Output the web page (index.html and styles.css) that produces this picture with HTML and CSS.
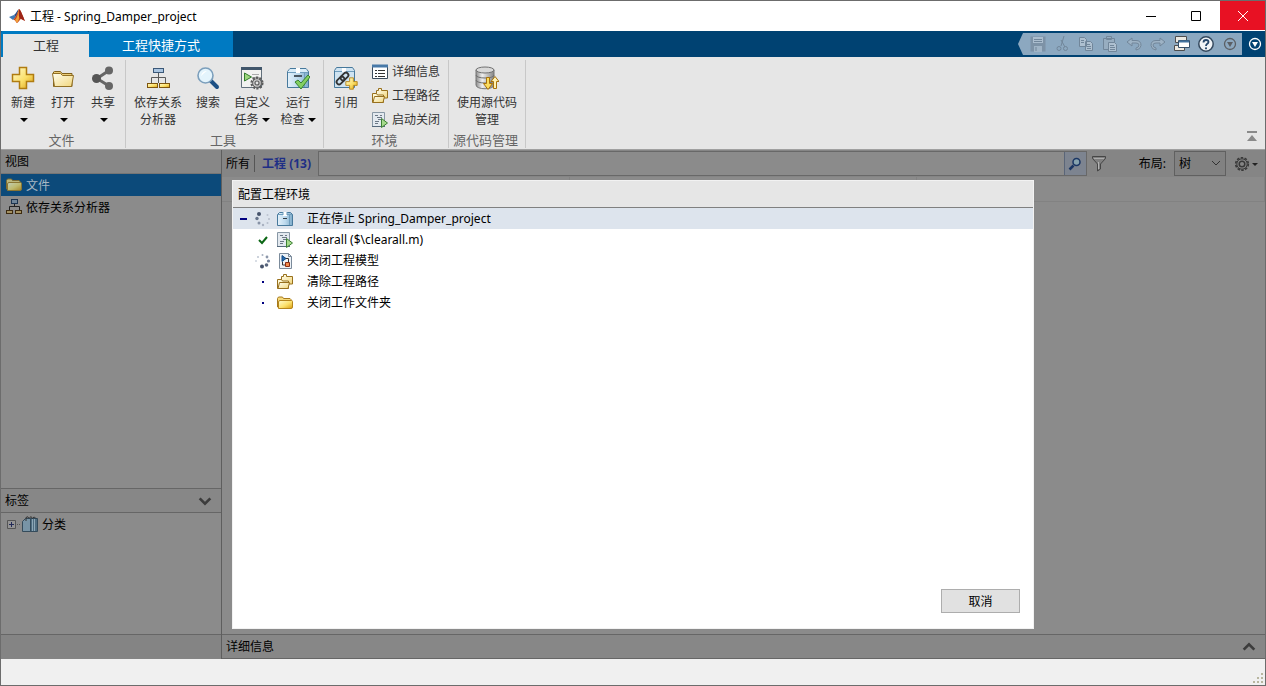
FILE: index.html
```
<!DOCTYPE html>
<html lang="zh-CN">

<head>
  <meta charset="utf-8">
  <title>工程 - Spring_Damper_project</title>
  <link rel="stylesheet" href="styles.css">
</head>

<body>
  <!-- icons used more than once -->
  <svg class="defs" width="0" height="0" aria-hidden="true">
    <defs>
      <linearGradient id="gold" x1="0" y1="0" x2="1" y2="1">
        <stop offset="0" stop-color="#fffbd0" />
        <stop offset=".55" stop-color="#fbe06a" />
        <stop offset="1" stop-color="#d99c10" />
      </linearGradient>
      <linearGradient id="cream" x1="0" y1="0" x2="1" y2="1">
        <stop offset="0" stop-color="#fffef0" />
        <stop offset="1" stop-color="#f1d67c" />
      </linearGradient>
      <linearGradient id="blue" x1="0" y1="0" x2="1" y2="0">
        <stop offset="0" stop-color="#e4f1fa" />
        <stop offset=".5" stop-color="#bddaee" />
        <stop offset="1" stop-color="#7eabc9" />
      </linearGradient>
      <linearGradient id="steel" x1="0" y1="0" x2="1" y2="0">
        <stop offset="0" stop-color="#8c8c8c" />
        <stop offset=".35" stop-color="#eeeeee" />
        <stop offset="1" stop-color="#858585" />
      </linearGradient>
    </defs>
    <symbol id="tree" viewBox="0 0 24 24">
      <path d="M12.500 7v10M5.500 17v-5.500h14V17" fill="none" stroke="#5a5a5a" />
      <rect x="7.500" y="2.500" width="10" height="4" fill="#a9c4e0" stroke="#3b5878" />
      <rect x="1.500" y="17.500" width="10" height="4" fill="url(#gold)" stroke="#7d5510" />
      <rect x="13.500" y="17.500" width="10" height="4" fill="url(#gold)" stroke="#7d5510" />
    </symbol>
    <symbol id="tree-small" viewBox="0 0 16 16">
      <path d="M8.500 4v4M3.500 11V7.500h10V11" fill="none" stroke="#222" />
      <rect x="5.500" y=".5" width="6" height="4" fill="#6f8599" stroke="#1c3450" />
      <rect x=".5" y="11.500" width="6" height="3" fill="#a39162" stroke="#3d2b10" />
      <rect x="9.500" y="11.500" width="6" height="3" fill="#a39162" stroke="#3d2b10" />
    </symbol>
    <symbol id="box" viewBox="0 0 24 24">
      <path d="M1.500 5.500 4 2.500h16l2.500 3v16h-21z" fill="url(#blue)" stroke="#47799c" />
      <path d="M2 6h20l-2-3H4z" fill="#d9ecf8" />
      <path d="M2 6.500h8M14 6.500h8M18.500 6.500V21" fill="none" stroke="#6f9dbd" />
      <path d="M10 2h4v5h-4z" fill="#fff" />
      <path d="M8 10h8" stroke="#4a5660" stroke-width="2" />
    </symbol>
    <symbol id="box-small" viewBox="0 0 16 16">
      <path d="M.5 3.500l2-2h11l2 2v11H.5z" fill="url(#blue)" stroke="#47799c" />
      <path d="M1 3.500h14M12.500 4v10" fill="none" stroke="#6f9dbd" />
      <path d="M6 1h4v4H6z" fill="#fff" />
      <path d="M6 1v3M10 1v3" stroke="#6f9dbd" />
      <path d="M6 7.500h4" stroke="#333c44" />
    </symbol>
    <symbol id="folder" viewBox="0 0 16 16">
      <path d="M.5 12V3.500l1-1.500h4l1 1.500h6.500l1 1V12z" fill="#f6da7c" stroke="#a77a1c" />
      <path d="M1.500 13.500V7q0-1.500 1.500-1.500h11.500q1 0 1 1v5.500q0 1.500-1.500 1.500z" fill="url(#gold)" stroke="#b5851c" />
    </symbol>
    <symbol id="folders" viewBox="0 0 16 16">
      <path d="M4.500 10V2.500h2V.5h3v2h6V10z" fill="url(#cream)" stroke="#98701d" />
      <path d="M.5 14.500v-9h4l1 1.500h6v7.500z" fill="#fff8d2" stroke="#98701d" />
      <path d="M1 14.500 2.500 8.500h10l-1.500 6z" fill="url(#cream)" stroke="#98701d" />
    </symbol>
    <symbol id="script" viewBox="0 0 16 16">
      <path d="M.5.500h12v14H.5z" fill="#e3e9ef" stroke="#8797a5" />
      <path d="M0 14.500h13" stroke="#56697c" />
      <path d="M3 3.500h3M5 5.500h5M6 7.500h3M3 9.500h4M3 11.500h3M8 3.500h2" stroke="#6b7785" />
      <path d="M9.500 6.500v9l6-4.500z" fill="#a6da8c" stroke="#3c8034" />
    </symbol>
    <symbol id="gear" viewBox="0 0 16 16">
      <circle cx="8" cy="8" r="6" fill="none" stroke="#5c5c5c" stroke-width="3" stroke-dasharray="2.400 1.370" />
      <circle cx="8" cy="8" r="5" fill="#c6c6c6" stroke="#5c5c5c" />
      <circle cx="8" cy="8" r="2.300" fill="#e5e5e5" stroke="#5c5c5c" stroke-width="1.300" />
    </symbol>
    <symbol id="plus" viewBox="0 0 24 24">
      <path d="M8.500 1.500h7v7h7v7h-7v7h-7v-7h-7v-7h7z" fill="url(#gold)" stroke="#b07c10" stroke-width="1.500" />
    </symbol>
  </svg>

  <div class="window">
    <header class="titlebar">
      <svg class="logo" viewBox="0 0 16 16">
        <path d="M0 9l5-2 2 2-3 3z" fill="#3e79b5" />
        <path d="M5 7c2-1 3-5 5-6L7 9z" fill="#2a4d84" />
        <path d="M10 1C8 5 8 8 4 12c2-1 3 3 4 3 2-1 3-4 4-4s2 1 4 2C14 9 12 2 10 1z" fill="#c8441c" />
        <path d="M10 1C9 6 8 10 6 12l2 3c2-2 3-7 2-14z" fill="#f0a23c" />
        <path d="M10 1c0 5-1 8 2 10 1 0 2 1 4 2C14 9 12 2 10 1z" fill="#9c2418" />
      </svg>
      <h1>工程 - Spring_Damper_project</h1>
      <div class="window-buttons">
        <button type="button" aria-label="最小化"><svg viewBox="0 0 12 12"><path d="M1 6.500h10" /></svg></button>
        <button type="button" aria-label="最大化"><svg viewBox="0 0 12 12"><path d="M1.500 1.500h9v9h-9z" /></svg></button>
        <button type="button" class="close" aria-label="关闭"><svg viewBox="0 0 12 12"><path d="M1 1l10 10M11 1 1 11" /></svg></button>
      </div>
    </header>

    <nav class="tabs">
      <button type="button" class="tab active">工程</button>
      <button type="button" class="tab">工程快捷方式</button>
      <div class="quick">
        <button type="button" aria-label="保存"><svg viewBox="0 0 16 16"><g class="faded"><path d="M.5.500h15v15h-15z" fill="#77899c" /><path d="M3 1h10v6H3z" fill="#b8c7d4" /><path d="M4 10h8v6H4z" fill="#a8bac9" /><path d="M4 3.500h8M4 5.500h8M6 11v4" stroke="#66788a" /></g></svg></button>
        <button type="button" aria-label="剪切"><svg viewBox="0 0 16 16"><g class="faded" fill="none" stroke="#66788a"><path d="M10 0 7 10M7 4l4 7" /><circle cx="5" cy="12.500" r="2" /><circle cx="11.500" cy="12.500" r="2" /></g></svg></button>
        <button type="button" aria-label="复制"><svg viewBox="0 0 16 16"><g class="faded" fill="#bccbd8" stroke="#66788a"><path d="M1.500 1.500h5l2 2v7h-7zM7.500 5.500h5l2 2v7h-7z" /><path d="M3 4.500h3M3 6.500h3M9 8.500h3M9 10.500h4M9 12.500h4" /></g></svg></button>
        <button type="button" aria-label="粘贴"><svg viewBox="0 0 16 16"><g class="faded" fill="#9cb0c1" stroke="#66788a"><path d="M1.500 2.500h11v11h-11zM4.500.500h5v3h-5z" /><path d="M6.500 6.500h6l2 2v7h-8z" fill="#bccbd8" /><path d="M8 9.500h4M8 11.500h5M8 13.500h5" /></g></svg></button>
        <button type="button" aria-label="撤销"><svg viewBox="0 0 16 16"><path class="faded" d="M1 6l5-4v2.500h4q5 0 5 5-.5 4-5 4.500v-2q3-.5 3-3 0-2-3-2H6V10z" fill="#a5b8c8" stroke="#66788a" /></svg></button>
        <button type="button" aria-label="重做"><svg viewBox="0 0 16 16"><path class="faded" d="M15 6l-5-4v2.500H6q-5 0-5 5 .5 4 5 4.500v-2q-3-.5-3-3 0-2 3-2h4V10z" fill="#a5b8c8" stroke="#66788a" /></svg></button>
        <button type="button" aria-label="切换窗口"><svg viewBox="0 0 16 16"><path d="M1.500.500h11v6h-11zM.5 9.500h10v5H.5z" fill="#ece9e2" stroke="#4e4e4e" /><path d="M4.500 4.500h11v7h-11z" fill="#fff" stroke="#35506b" /><path d="M5 5.500h10" stroke="#4273a0" stroke-width="2" /></svg></button>
        <button type="button" aria-label="帮助"><svg viewBox="0 0 16 16"><circle cx="8" cy="8" r="7.200" fill="#f0f3f6" stroke="#34495e" stroke-width="1.500" /><path d="M5.500 6.500q0-2.500 2.500-2.500t2.500 2q0 1-1.500 2-1 .7-1 2" fill="none" stroke="#25466a" stroke-width="1.800" /><circle cx="8" cy="12.300" r="1.100" fill="#25466a" /></svg></button>
        <button type="button" aria-label="更多"><svg viewBox="0 0 16 16"><circle cx="8" cy="8" r="5.500" fill="none" stroke="#5b5f64" stroke-width="1.300" /><path d="M5 6h6l-3 5z" fill="#5b5f64" /></svg></button>
      </div>
      <button type="button" class="quick-menu" aria-label="自定义工具栏"><svg viewBox="0 0 16 16"><circle cx="8" cy="8" r="5.500" fill="none" stroke="#fff" stroke-width="1.300" /><path d="M5 6h6l-3 5z" fill="#fff" /></svg></button>
    </nav>

    <section class="ribbon">
      <div class="group file">
        <div class="tools">
          <button type="button" class="tool"><svg viewBox="0 0 24 24"><use href="#plus" /></svg>新建<i class="caret"></i></button>
          <button type="button" class="tool"><svg viewBox="0 0 24 24"><path d="M2.500 20.500V6l1-.5h6l1.500 2h10v13z" fill="#eccd78" stroke="#80601c" /><path d="M3.500 20.500 1.500 7.500h8l2 2h11l-2 11z" fill="url(#cream)" stroke="#927024" /></svg>打开<i class="caret"></i></button>
          <button type="button" class="tool"><svg viewBox="0 0 24 24"><path d="M18 4.500 6 12.500 18 20" fill="none" stroke="#666" stroke-width="3" /><circle cx="18" cy="4.500" r="4" fill="#666" /><circle cx="5.500" cy="12.500" r="4.500" fill="#555" /><circle cx="18" cy="20" r="4" fill="#666" /></svg>共享<i class="caret"></i></button>
        </div>
        <h2>文件</h2>
      </div>
      <div class="group utils">
        <div class="tools">
          <button type="button" class="tool wide"><svg viewBox="0 0 24 24"><use href="#tree" /></svg>依存关系<br>分析器</button>
          <button type="button" class="tool"><svg viewBox="0 0 24 24"><path d="m15 15 6 6" stroke="#1c4f84" stroke-width="4" stroke-linecap="round" /><circle cx="9.500" cy="9.500" r="7.500" fill="#e4f4fc" stroke="#7c9fbc" stroke-width="1.600" /><path d="M5 10q1-5 6-5-2 1-6 5z" fill="#fff" /></svg>搜索</button>
          <button type="button" class="tool custom"><svg viewBox="0 0 24 24"><path d="M1.500 1.500h20v20h-20z" fill="#f2f2f0" stroke="#62707c" /><path d="M1 2.500h21" stroke="#41566b" stroke-width="3" /><path d="M12 8.500h7M12 11.500h7" stroke="#aaa" /><path d="M4.500 7v8l7-4z" fill="#9dd77d" stroke="#347c2d" /><use href="#gear" x="10" y="10" width="14" height="14" /></svg>自定义<span>任务<i class="caret"></i></span></button>
          <button type="button" class="tool check"><svg viewBox="0 0 24 24"><use href="#box" /><path d="m9 16 3-2 3 3 7-8 2 2-9 12z" fill="#83cf62" stroke="#36822f" /></svg>运行<span>检查<i class="caret"></i></span></button>
        </div>
        <h2>工具</h2>
      </div>
      <div class="group env">
        <div class="tools">
          <button type="button" class="tool"><svg viewBox="0 0 24 24"><path d="M.5 4.500l2-3h16l2 3v17H.5z" fill="#cfe3f1" stroke="#47799c" /><path d="M1 5.500h19" stroke="#6f9dbd" /><path d="M8 2h4v4H8z" fill="#fff" /><g fill="none" stroke="#333" stroke-width="1.800"><rect x="2" y="12" width="9" height="5" rx="2.500" transform="rotate(-45 6.500 14.500)" /><rect x="6" y="8" width="9" height="5" rx="2.500" transform="rotate(-45 10.500 10.500)" /></g><use href="#plus" x="11" y="11" width="13" height="13" /></svg>引用</button>
          <div class="tool-list">
            <button type="button"><svg viewBox="0 0 16 16"><path d="M.5 1.500h15v13H.5z" fill="#fff" stroke="#3c4c5c" /><path d="M0 2h16" stroke="#4879a8" stroke-width="3" /><path d="M3 6.500h2M3 9.500h2M3 12.500h2M6 6.500h7M6 9.500h7M6 12.500h7" stroke="#333" /></svg>详细信息</button>
            <button type="button"><svg viewBox="0 0 16 16"><use href="#folders" /></svg>工程路径</button>
            <button type="button"><svg viewBox="0 0 16 16"><use href="#script" /></svg>启动关闭</button>
          </div>
        </div>
        <h2>环境</h2>
      </div>
      <div class="group source">
        <div class="tools">
          <button type="button" class="tool wide"><svg viewBox="0 0 24 24"><path d="M1 4v15c0 5 18 5 18 0V4z" fill="url(#steel)" stroke="#777" /><ellipse cx="10" cy="4" rx="9" ry="3" fill="#d9d9d9" stroke="#707070" /><path d="M1 9c0 4 18 4 18 0M1 14c0 4 18 4 18 0" fill="none" stroke="#707070" /><path d="M11.500 11.500h3v6h3l-4.500 6-4.500-6h3z" fill="#fbdc5e" stroke="#a8720c" /><path d="M18.500 22.500h3v-7h2.500l-4-5-4 5h2.500z" fill="#fff3b4" stroke="#a8720c" /></svg>使用源代码<br>管理</button>
        </div>
        <h2>源代码管理</h2>
      </div>
      <button type="button" class="collapse" aria-label="折叠工具条"><svg viewBox="0 0 12 12"><path d="M1 1h10v2H1zM6 5l5 6H1z" fill="#8a8a8a" /></svg></button>
    </section>

    <div class="workspace">
      <aside class="sidebar">
        <h2 class="panel-title">视图</h2>
        <ul class="views">
          <li class="selected"><svg viewBox="0 0 16 16"><use href="#folder" /></svg>文件</li>
          <li><svg viewBox="0 0 16 16"><use href="#tree-small" /></svg>依存关系分析器</li>
        </ul>
        <h2 class="panel-title labels">标签<svg class="chevron" viewBox="0 0 12 12"><path d="m2 4 4 4 4-4" /></svg></h2>
        <div class="label-tree">
          <svg class="expander" viewBox="0 0 14 10"><path d="M.5.500h8v8h-8z" fill="#949494" stroke="#555" /><path d="M2 4.500h5M4.500 2v5" stroke="#222a58" /><path d="M10 4.500h4" stroke="#555" stroke-dasharray="1 1" /></svg>
          <svg viewBox="0 0 16 16"><path d="M5.500 2.500h10v13h-10z" fill="#4f6c80" stroke="#344b5b" /><path d="M.5 5.500l3-3h5v13h-8z" fill="#7894a6" stroke="#344b5b" /><path d="M10.500 3v12M12.500 3v12" stroke="#8da7b7" /><path d="M4 5V1.500q2-2 3 1M7.500 1.500q2-2 3 1M11 1.500q2-1 3 1" fill="none" stroke="#333" /></svg>
          分类
        </div>
        <div class="sidebar-foot"></div>
      </aside>

      <main class="content">
        <div class="toolbar">
          <a href="#" class="all">所有</a>
          <a href="#" class="crumb">工程 (13)</a>
          <div class="search">
            <input type="text" aria-label="搜索文件">
            <button type="button" aria-label="搜索"><svg viewBox="0 0 14 14"><path d="m1.500 12.500 4-4" stroke="#1b3664" stroke-width="2.500" /><circle cx="8.500" cy="5" r="3.500" fill="#86a2ae" stroke="#1b3664" stroke-width="1.500" /></svg></button>
          </div>
          <button type="button" class="filter" aria-label="筛选"><svg viewBox="0 0 16 16"><path d="M1.500.500h13v2L9.500 8v5l-3 2V8L1.500 2.500z" fill="#7f7f7f" stroke="#454545" /><path d="M3 2.500h10" stroke="#aaa" /><path d="M7.500 6v7" stroke="#b4b4b4" /></svg></button>
          <label for="layout">布局:</label>
          <div class="select">
            <select id="layout">
              <option>树</option>
            </select>
            <svg viewBox="0 0 12 12"><path d="m2 4 4 4 4-4" /></svg>
          </div>
          <button type="button" class="options" aria-label="选项"><svg viewBox="0 0 16 16"><g fill="none" stroke="#383838"><circle cx="8" cy="8" r="6.300" stroke-width="1.600" stroke-dasharray="2.500 1.450" /><circle cx="8" cy="8" r="5.200" /><circle cx="8" cy="8" r="2.800" stroke-width="1.500" /></g></svg><i class="caret"></i></button>
        </div>
        <div class="columns"><span></span><span></span><span></span></div>
        <div class="files"></div>
        <h2 class="details">详细信息<svg class="chevron" viewBox="0 0 12 12"><path d="m2 8 4-4 4 4" /></svg></h2>
      </main>

      <div class="overlay">
        <section class="dialog" role="dialog" aria-labelledby="dialog-title">
          <h2 id="dialog-title">配置工程环境</h2>
          <ul class="steps">
            <li class="current">
              <i class="dash"></i>
              <svg class="state" viewBox="0 0 16 16"><circle cx="4" cy="3" r="2" fill="#46536b" /><circle cx="2" cy="7.500" r="1.700" fill="#66738a" /><circle cx="4" cy="12" r="1.500" fill="#8793a6" /><circle cx="8" cy="14" r="1.200" fill="#a8b1c0" /><circle cx="12.500" cy="12" r="1" fill="#b4bdc9" /><circle cx="14" cy="8" r="1" fill="#b4bdc9" /><circle cx="12.500" cy="4" r="1" fill="#bdc5d0" /></svg>
              <svg class="icon" viewBox="0 0 16 16"><use href="#box-small" /></svg>
              正在停止 Spring_Damper_project
            </li>
            <li>
              <svg class="state" viewBox="0 0 16 16"><path d="m4 8 3 3 5-6" fill="none" stroke="#0b6614" stroke-width="2" /></svg>
              <svg class="icon" viewBox="0 0 16 16"><use href="#script" /></svg>
              clearall ($\clearall.m)
            </li>
            <li>
              <svg class="state" viewBox="0 0 16 16"><circle cx="7" cy="13.500" r="2" fill="#46536b" /><circle cx="11.500" cy="12" r="1.800" fill="#59667e" /><circle cx="13.500" cy="8" r="1.600" fill="#74819a" /><circle cx="12" cy="4" r="1.400" fill="#8c97aa" /><circle cx="7.500" cy="2" r="1" fill="#a8b1c0" /><circle cx="3" cy="4" r="1" fill="#bdc5d0" /><circle cx="1" cy="8" r="1" fill="#cdd3dc" /></svg>
              <svg class="icon" viewBox="0 0 16 16"><path d="M2.500.500h9l3 3v12h-12z" fill="#edf2f7" stroke="#7b8b9b" /><path d="M11.500.500v3h3" fill="none" stroke="#7b8b9b" /><path d="M5 2.500v6l4-3z" fill="#2468ab" stroke="#124a85" /><path d="M9 5.500h2.500V9" fill="none" stroke="#333" /><path d="M8.500 9.500h4v4h-4z" fill="#f28b4c" stroke="#8c2c12" /><path d="M8 12H5.500V9" fill="none" stroke="#333" /></svg>
              关闭工程模型
            </li>
            <li>
              <svg class="state" viewBox="0 0 16 16"><path d="M7 7h2v2H7z" fill="#000080" /></svg>
              <svg class="icon" viewBox="0 0 16 16"><use href="#folders" /></svg>
              清除工程路径
            </li>
            <li>
              <svg class="state" viewBox="0 0 16 16"><path d="M7 7h2v2H7z" fill="#000080" /></svg>
              <svg class="icon" viewBox="0 0 16 16"><use href="#folder" /></svg>
              关闭工作文件夹
            </li>
          </ul>
          <div class="actions"><button type="button">取消</button></div>
        </section>
      </div>
    </div>

    <footer class="statusbar">
      <svg viewBox="0 0 12 12"><path d="M9 1h2v2H9zM5 5h2v2H5zM9 5h2v2H9zM1 9h2v2H1zM5 9h2v2H5zM9 9h2v2H9z" fill="#b8b6a0" /></svg>
    </footer>
  </div>
</body>

</html>
```

FILE: styles.css
```
* {
box-sizing: border-box;
}

body {
margin: 0;
font-family: "Noto Sans", "Noto Sans CJK SC", sans-serif;
font-size: 12px;
line-height: 17px;
color: #000;
}

h1, h2, ul {
margin: 0;
padding: 0;
font-size: 12px;
font-weight: normal;
list-style: none;
}

button {
font: inherit;
color: inherit;
background: none;
border: none;
padding: 0;
}

a {
color: inherit;
text-decoration: none;
}

svg {
display: block;
flex: none;
width: 16px;
height: 16px;
}

.defs {
position: absolute;
width: 0;
height: 0;
}

.window {
display: flex;
flex-direction: column;
height: 100vh;
border: 1px solid #6c6c6c;
}

/* title bar */
.titlebar {
display: flex;
align-items: center;
height: 30px;
padding-left: 8px;
background-color: #fff;
}

.titlebar h1 {
flex: 1;
margin-left: 5px;
}

.window-buttons {
display: flex;
height: 29px;
align-self: flex-start;
}

.window-buttons button {
display: flex;
align-items: center;
justify-content: center;
width: 45px;
}

.window-buttons svg {
width: 12px;
height: 12px;
fill: none;
stroke: #000;
}

.window-buttons .close {
margin-left: 2px;
background-color: #e81123;
}

.window-buttons .close svg {
stroke: #fff;
}

/* tabs */
.tabs {
display: flex;
height: 26px;
background-color: #004272;
}

.tab {
width: 144px;
padding-top: 2px;
font-size: 13px;
color: #fff;
background-color: #007ac2;
}

.tab.active {
width: 88px;
color: #333;
background-color: #e6e6e6;
border: solid #007ac2;
border-width: 3px 0 0 2px;
border-radius: 2px 2px 0 0;
padding-top: 0;
}

.quick {
display: flex;
align-items: center;
gap: 8px;
height: 22px;
margin: 2px 5px 0 auto;
padding: 0 4px 0 12px;
background-color: #8ca8c0;
clip-path: polygon(5px 0, 100% 0, 100% 100%, 5px 100%, 0 50%);
}

.faded {
opacity: 0.7;
}

.quick-menu {
margin-right: 2px;
}

/* ribbon */
.ribbon {
display: flex;
height: 93px;
padding-top: 3px;
color: #333;
background-color: #e6e6e6;
border-bottom: 1px solid #a0a0a0;
}

.group {
display: flex;
flex-direction: column;
height: 88px;
border-right: 1px solid #c8c8c8;
}

.group h2 {
margin-top: auto;
height: 15px;
padding-right: 3px;
text-align: center;
color: #666;
font-size: 13px;
line-height: 15px;
white-space: nowrap;
}

.file {
width: 125px;
}

.utils {
width: 198px;
}

.env {
width: 125px;
}

.source {
width: 77px;
}

.tools {
display: flex;
padding: 6px 0 0 2px;
}

.tool {
display: flex;
flex-direction: column;
align-items: center;
width: 40px;
}

.tool svg {
width: 24px;
height: 24px;
margin-bottom: 4px;
}

.tool span {
display: flex;
align-items: center;
gap: 1px;
white-space: nowrap;
}

.wide {
width: 60px;
}

.source .wide {
width: 72px;
}

.custom {
width: 48px;
}

.check {
width: 44px;
}

.caret {
margin: 1px 0 0 2px;
border: solid transparent;
border-width: 4px 4px 0;
border-top-color: #000;
}

.file .caret {
margin-top: 7px;
}

.tool-list {
display: flex;
flex-direction: column;
gap: 7px;
margin: -3px 0 0 6px;
}

.tool-list button {
display: flex;
align-items: center;
gap: 4px;
white-space: nowrap;
}

.collapse {
align-self: flex-end;
margin: 0 7px 7px auto;
}

.collapse svg {
width: 12px;
height: 12px;
}

/* workspace, greyed out behind the dialog */
.workspace {
position: relative;
display: flex;
flex: 1;
min-height: 0;
background-color: #8b8b8b;
}

.sidebar {
display: flex;
flex-direction: column;
width: 221px;
border-right: 1px solid #5e5e5e;
}

.panel-title {
display: flex;
align-items: center;
justify-content: space-between;
height: 24px;
padding: 0 8px 0 4px;
background-color: #878787;
border-bottom: 1px solid #757575;
}

.labels {
height: 25px;
border: solid #666;
border-width: 1px 0;
}

.chevron {
width: 16px;
height: 16px;
fill: none;
stroke: #3c3c3c;
stroke-width: 2;
}

.views {
flex: 1;
}

.views li {
display: flex;
align-items: center;
gap: 4px;
height: 22px;
padding-left: 5px;
}

.views .selected {
color: #a8b8c4;
background-color: #0c4a7a;
}

.views .selected svg {
opacity: 0.75;
}

.label-tree {
display: flex;
align-items: flex-start;
gap: 4px;
height: 121px;
padding: 3px 0 0 6px;
}

.label-tree .expander {
width: 14px;
height: 10px;
margin: 4px -3px 0 0;
}

.sidebar-foot {
height: 25px;
background-color: #848484;
border-top: 1px solid #666;
}

.content {
display: flex;
flex: 1;
flex-direction: column;
min-width: 0;
}

.toolbar {
display: flex;
align-items: center;
height: 27px;
padding: 0 7px 0 4px;
background-color: #858585;
}

.all {
padding-right: 4px;
border-right: 1px solid #555;
}

.crumb {
padding-left: 7px;
color: #1f2f86;
font-weight: bold;
}

.search {
display: flex;
flex: 1;
height: 25px;
margin: 0 4px 0 7px;
border: 1px solid #686868;
}

.search input {
flex: 1;
min-width: 0;
font: inherit;
background-color: #8b8b8b;
border: none;
}

.search button {
display: flex;
align-items: center;
justify-content: center;
width: 22px;
background-color: #7d8490;
border-left: 1px solid #5a6578;
}

.search button svg {
width: 14px;
height: 14px;
}

.toolbar label {
margin: 0 8px 0 32px;
}

.select {
position: relative;
width: 52px;
height: 25px;
}

.select select {
width: 100%;
height: 100%;
padding: 0 4px;
font: inherit;
color: #000;
appearance: none;
background-color: #818181;
border: 1px solid #606060;
border-radius: 0;
}

.select svg {
position: absolute;
top: 6px;
right: 4px;
width: 12px;
height: 12px;
fill: none;
stroke: #333;
pointer-events: none;
}

.options {
display: flex;
align-items: center;
margin-left: 8px;
}

.options .caret {
border-width: 3px 3px 0;
border-top-color: #222;
}

.columns {
display: flex;
height: 25px;
border-bottom: 1px solid #828282;
}

.columns span {
width: 35%;
border-right: 1px solid #828282;
}

.files {
flex: 1;
}

.details {
display: flex;
align-items: center;
justify-content: space-between;
height: 25px;
padding: 0 8px 0 4px;
background-color: #878787;
border: solid #666;
border-width: 1px 0;
}

/* dialog */
.overlay {
position: absolute;
inset: 0;
display: flex;
justify-content: center;
padding: 30px 0;
}

.dialog {
display: flex;
flex-direction: column;
width: 802px;
max-width: 90%;
background-color: #fff;
border: 1px solid #f2f2f2;
}

.dialog h2 {
height: 27px;
padding: 0 5px;
line-height: 27px;
background-color: #e6e6e6;
border-bottom: 1px solid #808080;
}

.steps li {
display: flex;
align-items: center;
height: 21px;
padding-left: 22px;
}

.steps .current {
padding-left: 7px;
background-color: #dde4ed;
}

.dash {
width: 7px;
height: 2px;
margin-right: 8px;
background-color: #000080;
}

.steps .icon {
margin: 0 14px 0 6px;
}

.actions {
display: flex;
justify-content: flex-end;
margin-top: auto;
padding: 0 13px 15px;
}

.actions button {
width: 79px;
height: 24px;
background-color: #e1e1e1;
border: 1px solid #adadad;
}

.statusbar {
display: flex;
align-items: flex-end;
justify-content: flex-end;
height: 26px;
padding: 0 1px 1px 0;
background-color: #f0f0f0;
}

.statusbar svg {
width: 12px;
height: 12px;
}
```
